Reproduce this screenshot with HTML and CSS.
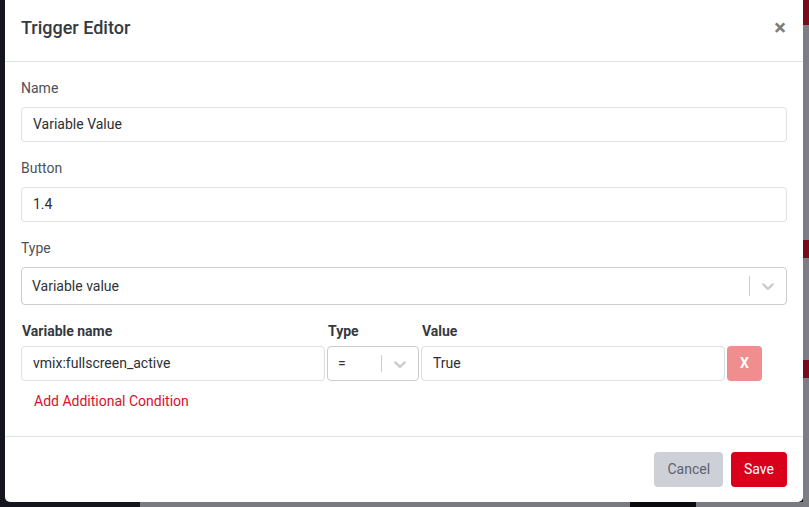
FILE: index.html
```html
<!DOCTYPE html>
<html lang="en">
<head>
<meta charset="utf-8">
<title>Trigger Editor</title>
<link rel="stylesheet" href="styles.css">
</head>
<body>
<div class="modal">
  <div class="modal-header">
    <h5 class="modal-title">Trigger Editor</h5>
    <span class="close">×</span>
  </div>
  <div class="modal-body">
    <div class="form-group">
      <label class="label">Name</label>
      <div class="input">Variable Value</div>
    </div>
    <div class="form-group">
      <label class="label">Button</label>
      <div class="input">1.4</div>
    </div>
    <div class="form-group">
      <label class="label">Type</label>
      <div class="select">
        <div class="select-value">Variable value</div>
        <div class="select-ind">
          <span class="sep"></span>
          <span class="chev"><svg width="20" height="20" viewBox="0 0 20 20"><path d="M4.516 7.548c.436-.446 1.043-.481 1.576 0L10 11.295l3.908-3.747c.533-.481 1.141-.446 1.574 0 .436.445.408 1.197 0 1.615-.406.418-4.695 4.502-4.695 4.502a1.095 1.095 0 0 1-1.576 0S4.924 9.581 4.516 9.163c-.409-.418-.436-1.17 0-1.615z" fill="#cccccc"/></svg></span>
        </div>
      </div>
    </div>
    <div class="cond">
      <div class="cond-label">Variable name</div>
      <div class="cond-label">Type</div>
      <div class="cond-label">Value</div>
      <div></div>
      <div class="input">vmix:fullscreen_active</div>
      <div class="select small">
        <div class="select-value">=</div>
        <div class="select-ind">
          <span class="sep"></span>
          <span class="chev"><svg width="20" height="20" viewBox="0 0 20 20"><path d="M4.516 7.548c.436-.446 1.043-.481 1.576 0L10 11.295l3.908-3.747c.533-.481 1.141-.446 1.574 0 .436.445.408 1.197 0 1.615-.406.418-4.695 4.502-4.695 4.502a1.095 1.095 0 0 1-1.576 0S4.924 9.581 4.516 9.163c-.409-.418-.436-1.17 0-1.615z" fill="#cccccc"/></svg></span>
        </div>
      </div>
      <div class="input">True</div>
      <div class="btn-x">X</div>
    </div>
    <a class="add-link">Add Additional Condition</a>
  </div>
  <div class="modal-footer">
    <div class="btn btn-cancel">Cancel</div>
    <div class="btn btn-save">Save</div>
  </div>
</div>
</body>
</html>
```
FILE: styles.css
```css
* { box-sizing: border-box; }
html, body { margin: 0; padding: 0; }
body {
  width: 809px;
  height: 507px;
  overflow: hidden;
  font-family: Roboto, "Liberation Sans", sans-serif;
  font-size: 14px;
  line-height: 21px;
  color: #212529;
  background:
    linear-gradient(#7a0a1c, #7a0a1c) right top / 6px 25px no-repeat,
    linear-gradient(#7a0a1c, #7a0a1c) right 240px / 6px 18px no-repeat,
    linear-gradient(#7a0a1c, #7a0a1c) right 360px / 6px 18px no-repeat,
    linear-gradient(#7d7d86, #7d7d86) right top / 6px 100% no-repeat,
    linear-gradient(#0a0a0f, #0a0a0f) 630px bottom / 66px 5px no-repeat,
    linear-gradient(#7a7a83, #7a7a83) 140px bottom / 100% 5px no-repeat,
    #15151d;
}
.modal {
  margin-left: 5px;
  width: 798px;
  height: 502px;
  background: #fff;
  border-radius: 0 0 5px 5px;
  display: flex;
  flex-direction: column;
}
.modal-header {
  display: flex;
  align-items: center;
  justify-content: space-between;
  padding: 14px 16px 20px 16px;
  border-bottom: 1px solid #dee2e6;
}
.modal-title {
  margin: 0;
  font-size: 18px;
  line-height: 27px;
  font-weight: 500;
  color: #343a40;
}
.close {
  font-size: 22px;
  line-height: 27px;
  font-weight: 700;
  color: #7d7d7d;
  margin-right: 1px;
}
.modal-body {
  padding: 16px 16px 22px 16px;
  display: flex;
  flex-direction: column;
}
.form-group {
  display: flex;
  flex-direction: column;
  margin-bottom: 16px;
}
.label {
  color: #4d525a;
  margin-bottom: 8px;
}
.input {
  height: 35px;
  border: 1px solid #dcdfe3;
  border-radius: 4px;
  padding: 6px 11px;
  color: #2b2f33;
}
.select {
  height: 38px;
  border: 1px solid #cccccc;
  border-radius: 4px;
  display: flex;
  align-items: center;
}
.select-value {
  flex: 1;
  padding: 0 10px;
  color: #333;
}
.select-ind {
  display: flex;
  align-items: center;
  align-self: stretch;
}
.sep {
  width: 1px;
  align-self: stretch;
  margin: 8px 0;
  background: #cccccc;
}
.chev {
  padding: 0 8px;
  display: flex;
}
.cond {
  display: grid;
  grid-template-columns: 304px 92px 304px 35px;
  column-gap: 2px;
  row-gap: 4px;
}
.cond-label {
  font-weight: 700;
  color: #343a40;
  padding-left: 1px;
}
.select.small {
  height: 35px;
}
.btn-x {
  height: 35px;
  background: #ef8d8f;
  border-radius: 4px;
  color: #fff;
  font-weight: 700;
  display: flex;
  align-items: center;
  justify-content: center;
}
.add-link {
  margin-top: 10px;
  margin-left: 13px;
  color: #d7102d;
}
.modal-footer {
  margin-top: auto;
  border-top: 1px solid #dee2e6;
  padding: 15px 16px;
  display: flex;
  justify-content: flex-end;
  gap: 8px;
}
.btn {
  height: 35px;
  padding: 6px 12px;
  border-radius: 4px;
  border: 1px solid transparent;
  line-height: 21px;
}
.btn-cancel {
  background: #cdd0d7;
  color: #5b6270;
}
.btn-save {
  background: #d9001b;
  color: #fff;
}
```
